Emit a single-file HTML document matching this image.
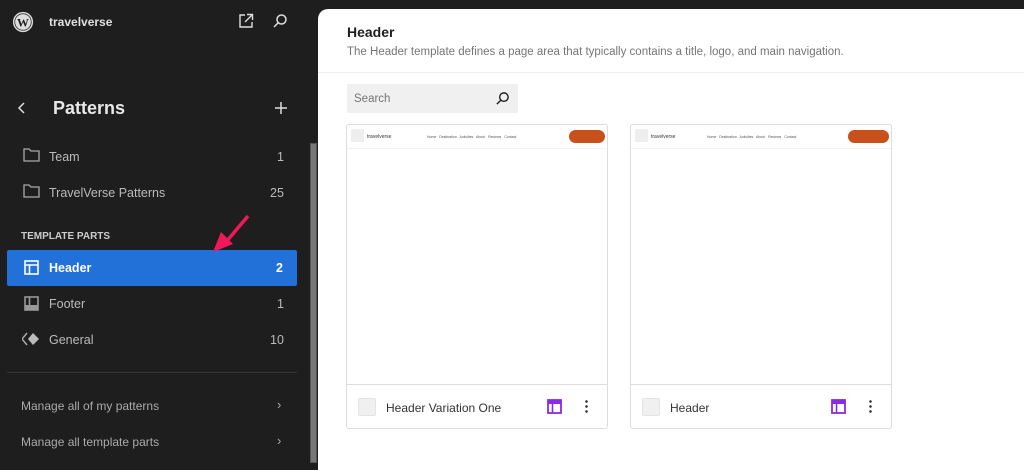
<!DOCTYPE html><html><head><style>
*{box-sizing:border-box;margin:0;padding:0}
body{width:1024px;height:470px;background:#1e1e1e;font-family:"Liberation Sans",sans-serif;position:relative;overflow:hidden}
.a{position:absolute}
.it{position:absolute;left:7px;width:290px;height:36px;font-size:12.5px;color:#bbb}
.it span{position:absolute;top:11px}
.main{position:absolute;left:318px;top:9px;width:706px;height:461px;background:#fff;border-top-left-radius:10px}
.card{position:absolute;top:124px;width:262px;height:305px;border:1px solid #ddd;border-radius:3px;background:#fff}
.nav{position:absolute;top:10px;font-size:3.5px;color:#555}
</style></head><body>
<svg class="a" style="left:12px;top:11px" width="22" height="22" viewBox="0 0 24 24"><circle cx="12" cy="12" r="11" fill="#ddd"/><circle cx="12" cy="12" r="9" fill="none" stroke="#1e1e1e" stroke-width="0.8"/><text x="12" y="17" font-size="13" font-family="Liberation Serif" font-weight="bold" fill="#1e1e1e" text-anchor="middle">W</text></svg>
<div class="a" style="left:49px;top:15px;font-size:12px;color:#e0e0e0;font-weight:bold">travelverse</div>
<svg class="a" style="left:238px;top:13px" width="16" height="16" viewBox="0 0 16 16" fill="none" stroke="#ddd" stroke-width="1.4"><path d="M7 2H2v12h12V9M9 1.5h5.5V7M14.5 1.5L7 9"/></svg>
<svg class="a" style="left:272px;top:13px" width="16" height="16" viewBox="0 0 16 16" fill="none" stroke="#ddd" stroke-width="1.5"><circle cx="9.5" cy="6.5" r="4.5"/><path d="M6.3 9.7L2 14"/></svg>
<svg class="a" style="left:17px;top:101px" width="10" height="14" viewBox="0 0 10 14" fill="none" stroke="#ddd" stroke-width="1.5"><path d="M7 2L2 7l5 5"/></svg>
<div class="a" style="left:53px;top:98px;font-size:18px;color:#e8e8e8;font-weight:bold">Patterns</div>
<svg class="a" style="left:274px;top:101px" width="14" height="14" viewBox="0 0 14 14" stroke="#ddd" stroke-width="1.5"><path d="M7 1v12M1 7h12"/></svg>
<svg class="a" style="left:23px;top:148px" width="17" height="14" viewBox="0 0 17 14" fill="none" stroke="#aaa" stroke-width="1.3"><path d="M1 1h5l2 2h8v10H1z"/></svg>
<div class="a" style="left:49px;top:150px;font-size:12.5px;color:#bbb">Team</div>
<div class="a" style="left:277px;top:150px;font-size:12.5px;color:#bbb">1</div>
<svg class="a" style="left:23px;top:184px" width="17" height="14" viewBox="0 0 17 14" fill="none" stroke="#aaa" stroke-width="1.3"><path d="M1 1h5l2 2h8v10H1z"/></svg>
<div class="a" style="left:49px;top:186px;font-size:12.5px;color:#bbb">TravelVerse Patterns</div>
<div class="a" style="left:270px;top:186px;font-size:12.5px;color:#bbb">25</div>
<div class="a" style="left:21px;top:231px;font-size:10px;color:#ccc;font-weight:bold">TEMPLATE PARTS</div>
<div class="it" style="top:250px;background:#2271d8;border-radius:2px;color:#fff;font-weight:bold"><svg class="a" style="left:17px;top:10px" width="15" height="15" viewBox="0 0 15 15" fill="none" stroke="#fff" stroke-width="1.6"><rect x="1" y="1" width="13" height="13"/><path d="M1 5h13M5.5 5v9"/></svg><span style="left:42px">Header</span><span style="left:269px">2</span></div>
<div class="it" style="top:286px"><svg class="a" style="left:17px;top:10px" width="15" height="15" viewBox="0 0 15 15"><rect x="1" y="1" width="13" height="13" fill="none" stroke="#999" stroke-width="1.6"/><rect x="1" y="9" width="13" height="5" fill="#999"/><path d="M5.5 1v8" stroke="#999" stroke-width="1.6"/></svg><span style="left:42px">Footer</span><span style="left:270px">1</span></div>
<div class="it" style="top:322px"><svg class="a" style="left:15px;top:10px" width="20" height="14" viewBox="0 0 20 14"><path d="M5 1L0 7l5 6" fill="none" stroke="#aaa" stroke-width="1.5"/><path d="M11 1l6 6-6 6-5-6z" fill="#bbb"/></svg><span style="left:42px">General</span><span style="left:263px">10</span></div>
<div class="a" style="left:7px;top:372px;width:290px;height:1px;background:#333"></div>
<div class="a" style="left:21px;top:399px;font-size:12px;color:#aaa">Manage all of my patterns</div>
<div class="a" style="left:21px;top:435px;font-size:12px;color:#aaa">Manage all template parts</div>
<div class="a" style="left:277px;top:397px;font-size:13px;color:#aaa">›</div>
<div class="a" style="left:277px;top:433px;font-size:13px;color:#aaa">›</div>
<div class="a" style="left:310px;top:143px;width:7px;height:320px;background:#777;border:1px solid #555"></div>
<div class="main">
<div class="a" style="left:29px;top:15px;font-size:14px;color:#1e1e1e;font-weight:bold">Header</div>
<div class="a" style="left:29px;top:37px;font-size:11.5px;color:#757575">The Header template defines a page area that typically contains a title, logo, and main navigation.</div>
<div class="a" style="left:0;top:63px;width:706px;height:1px;background:#eee"></div>
<div class="a" style="left:29px;top:75px;width:171px;height:29px;background:#f0f0f0;border-radius:2px"><span class="a" style="left:7px;top:9px;font-size:11.5px;color:#757575">Search</span><svg class="a" style="left:148px;top:7px" width="15" height="15" viewBox="0 0 16 16" fill="none" stroke="#1e1e1e" stroke-width="1.5"><circle cx="9.5" cy="6.5" r="4.5"/><path d="M6.3 9.7L2 14"/></svg></div>
</div>
<div class="card" style="left:346px">
<div class="a" style="left:4px;top:4px;width:13px;height:13px;background:#eee"></div>
<div class="a" style="left:20px;top:9px;font-size:5px;color:#333">travelverse</div>
<div class="nav" style="left:80px">Home &nbsp; Destination &nbsp; Activities &nbsp; About &nbsp; Reviews &nbsp; Contact</div>
<div class="a" style="left:222px;top:5px;width:36px;height:13px;background:#c8501a;border-radius:7px"></div>
<div class="a" style="left:0;top:23px;width:260px;height:1px;background:#f2f2f2"></div>
<div class="a" style="left:0;top:259px;width:260px;height:1px;background:#ddd"></div>
<div class="a" style="left:11px;top:273px;width:18px;height:18px;background:#f0f0f0;border:1px solid #e4e4e4;border-radius:2px"></div>
<div class="a" style="left:39px;top:276px;font-size:12px;color:#333">Header Variation One</div>
<svg class="a" style="left:200px;top:274px" width="15" height="15" viewBox="0 0 15 15"><rect x="1" y="1" width="13" height="13" fill="none" stroke="#8a2be2" stroke-width="1.8"/><rect x="1" y="1" width="13" height="4" fill="#8a2be2"/><path d="M5.5 5v9" stroke="#8a2be2" stroke-width="1.6"/></svg>
<div class="a" style="left:238px;top:274px;width:3px;height:15px;background:radial-gradient(circle,#333 1.2px,transparent 1.4px) 0 0/3px 5px"></div>
</div>
<div class="card" style="left:630px">
<div class="a" style="left:4px;top:4px;width:13px;height:13px;background:#eee"></div>
<div class="a" style="left:20px;top:9px;font-size:5px;color:#333">travelverse</div>
<div class="nav" style="left:76px">Home &nbsp; Destination &nbsp; Activities &nbsp; About &nbsp; Reviews &nbsp; Contact</div>
<div class="a" style="left:217px;top:5px;width:41px;height:13px;background:#c8501a;border-radius:7px"></div>
<div class="a" style="left:0;top:23px;width:260px;height:1px;background:#f2f2f2"></div>
<div class="a" style="left:0;top:259px;width:260px;height:1px;background:#ddd"></div>
<div class="a" style="left:11px;top:273px;width:18px;height:18px;background:#f0f0f0;border:1px solid #e4e4e4;border-radius:2px"></div>
<div class="a" style="left:39px;top:276px;font-size:12px;color:#333">Header</div>
<svg class="a" style="left:200px;top:274px" width="15" height="15" viewBox="0 0 15 15"><rect x="1" y="1" width="13" height="13" fill="none" stroke="#8a2be2" stroke-width="1.8"/><rect x="1" y="1" width="13" height="4" fill="#8a2be2"/><path d="M5.5 5v9" stroke="#8a2be2" stroke-width="1.6"/></svg>
<div class="a" style="left:238px;top:274px;width:3px;height:15px;background:radial-gradient(circle,#333 1.2px,transparent 1.4px) 0 0/3px 5px"></div>
</div>
<svg class="a" style="left:208px;top:212px" width="45" height="42" viewBox="0 0 45 42"><path d="M40 4L18 30" stroke="#f0185c" stroke-width="3.5"/><path d="M5 40l8-20 12 12z" fill="#f0185c"/></svg>
</body></html>
